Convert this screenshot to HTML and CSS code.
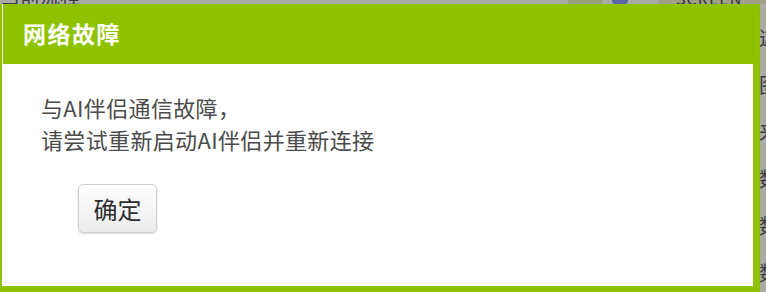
FILE: index.html
```html
<!DOCTYPE html>
<html lang="zh-CN">
<head>
<meta charset="utf-8">
<title>网络故障</title>
<link rel="stylesheet" href="styles.css">
</head>
<body>
<div class="page">
  <div class="topbar">
    <span class="crumb">当前流程</span>
    <span class="tb-spacer"></span>
    <span class="tb-btn"></span>
    <span class="tb-icon"></span>
    <span class="tb-tab">SCREEN</span>
  </div>
  <div class="side">
    <span>这</span><span>图</span><span>来</span><span>数</span><span>数</span><span>数</span>
  </div>
</div>

<div class="dialog">
  <div class="dlg-head">
    <div class="dlg-head-inner">网络故障</div>
  </div>
  <div class="dlg-body">
    <p class="msg">与AI伴侣通信故障，<br>请尝试重新启动AI伴侣并重新连接</p>
    <button class="btn">确定</button>
  </div>
</div>
</body>
</html>
```

FILE: styles.css
```css
html, body {
  margin: 0;
  padding: 0;
}
body {
  width: 766px;
  height: 292px;
  overflow: hidden;
  background: #aaaba4;
  font-family: "Noto Sans CJK SC", "Noto Sans", sans-serif;
  position: relative;
}
.page {
  width: 766px;
  height: 292px;
  position: relative;
}
.topbar {
  height: 4px;
  display: flex;
  align-items: flex-end;
  overflow: hidden;
}
.crumb {
  font-size: 20px;
  line-height: 20px;
  color: #3c3c44;
  margin-bottom: -2px;
  flex: none;
}
.tb-spacer { flex: 1; }
.tb-btn {
  width: 34px;
  height: 10px;
  background: #9aa07c;
  flex: none;
}
.tb-icon {
  width: 16px;
  height: 6px;
  margin: 0 30px 0 10px;
  background: #5a66a8;
  border-radius: 6px;
  flex: none;
}
.tb-tab {
  flex: none;
  width: 90px;
  font-size: 16px;
  line-height: 16px;
  color: #333;
  margin-bottom: -2px;
  background: #9fa085;
  letter-spacing: 1px;
  padding-left: 18px;
}
.side {
  position: absolute;
  left: 759px;
  top: 28px;
  display: flex;
  flex-direction: column;
  gap: 27px;
  font-size: 20px;
  line-height: 20px;
  color: #3a3a40;
}

.dialog {
  position: absolute;
  left: 0;
  top: 4px;
  width: 760px;
  height: 288px;
  box-sizing: border-box;
  background: #8fc200;
  padding: 0 7px 6px 2px;
  display: flex;
  flex-direction: column;
}
.dlg-head {
  height: 60px;
  box-sizing: border-box;
  padding: 5px 0 5px 0;
  border-left: 1px solid #ffffff;
}
.dlg-head-inner {
  height: 50px;
  box-sizing: border-box;
  border: 1px solid #8bbd00;
  border-left: none;
  background: #8fc300;
  color: #ffffff;
  font-weight: 700;
  font-size: 23px;
  line-height: 47px;
  padding-left: 20px;
  letter-spacing: 1.5px;
}
.dlg-body {
  flex: 1;
  background: #ffffff;
  padding: 27px 0 0 39px;
}
.msg {
  margin: 0;
  font-size: 22px;
  line-height: 32px;
  letter-spacing: 0.35px;
  color: #4b4b4b;
}
.btn {
  display: block;
  margin: 29px 0 0 37px;
  width: 79px;
  height: 49px;
  box-sizing: border-box;
  border: 1px solid #cfcfcf;
  border-radius: 5px;
  background: linear-gradient(#ffffff, #ececec);
  box-shadow: 0 1px 2px rgba(0,0,0,0.15);
  font-family: "Noto Sans CJK SC", "Noto Sans", sans-serif;
  font-size: 24px;
  color: #2e2e2e;
  padding: 0;
  line-height: 45px;
}
```
